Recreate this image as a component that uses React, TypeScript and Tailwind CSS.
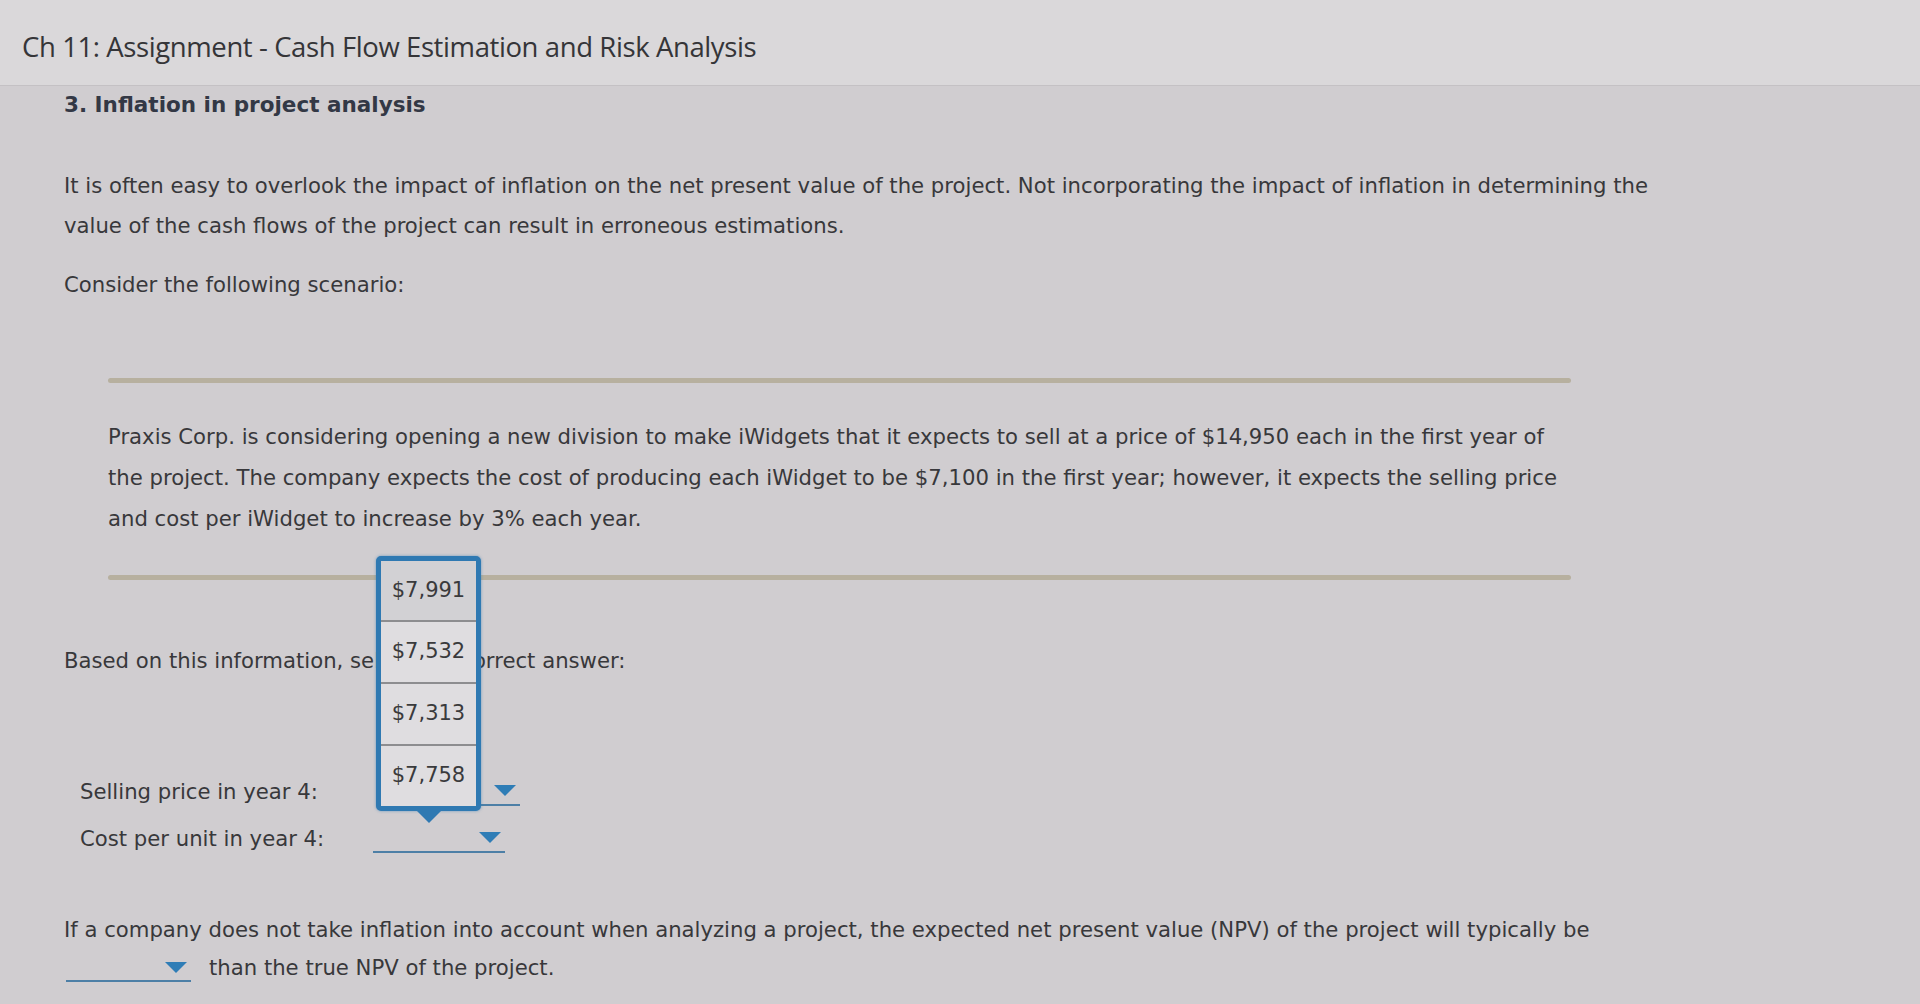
import React from "react";

const body = { fontFamily: '"DejaVu Sans", Verdana, sans-serif' } as const;

function Caret({ className = "" }: { className?: string }) {
  return (
    <svg width="22" height="11" viewBox="0 0 22 11" className={className}>
      <polygon points="0,0 22,0 11,11" fill="#2f7db6" />
    </svg>
  );
}

function Select({ width, children }: { width: string; children?: React.ReactNode }) {
  return (
    <div className={`relative flex h-[28px] items-center justify-end border-b-2 border-[#4d7fa6] pr-[4px] ${width}`}>
      <Caret />
      {children}
    </div>
  );
}

export default function App() {
  const options = ["$7,991", "$7,532", "$7,313", "$7,758"];
  return (
    <div className="min-h-screen w-full bg-[#d0cdd0] text-[#38383b]" style={body}>
      <header className="h-[86px] border-b border-[#c4c1c4] bg-[#dad8da] pl-[22px] pt-[29px]">
        <h1
          className="text-[27.5px] leading-[36px] text-[#353538]"
          style={{ fontFamily: '"Open Sans", "Noto Sans", sans-serif', letterSpacing: "-0.4px" }}
        >
          Ch 11: Assignment - Cash Flow Estimation and Risk Analysis
        </h1>
      </header>

      <main className="pl-[64px] pr-[200px]">
        <h2 className="mt-[5px] text-[21.5px] font-bold leading-[28px] text-[#333845]">
          3. Inflation in project analysis
        </h2>

        <p className="mt-[47px] max-w-[1630px] text-[21.2px] leading-[40px]">
          It is often easy to overlook the impact of inflation on the net present value of the project. Not
          incorporating the impact of inflation in determining the value of the cash flows of the project can result in
          erroneous estimations.
        </p>

        <p className="mt-[19px] text-[21.2px] leading-[40px]">Consider the following scenario:</p>

        <section className="ml-[44px]">
          <div className="mt-[73px] h-[5px] w-[1463px] rounded-full bg-[#b7b09f]" />
          <p className="mt-[33px] w-[1468px] text-[21.2px] leading-[41px]">
            Praxis Corp. is considering opening a new division to make iWidgets that it expects to sell at a price of
            $14,950 each in the first year of the project. The company expects the cost of producing each iWidget to be
            $7,100 in the first year; however, it expects the selling price and cost per iWidget to increase by 3% each
            year.
          </p>
          <div className="mt-[36px] h-[5px] w-[1463px] rounded-full bg-[#b7b09f]" />
        </section>

        <p className="mt-[61px] text-[21.2px] leading-[40px]">
          Based on this information, select the correct answer:
        </p>

        <div className="mt-[87px] pl-[16px] text-[21.2px]">
          <div className="flex h-[47px] items-center">
            <span className="w-[296px]">Selling price in year 4:</span>
            <Select width="w-[144px]">
              <div className="absolute bottom-[-7px] left-0 z-10 flex h-[255px] w-[105px] flex-col rounded-[5px] border-[5px] border-[#2f79b2] bg-[#e4e2e4] shadow-[0_0_3px_rgba(47,121,178,0.6)]">
                {options.map((o, i) => (
                  <div
                    key={o}
                    className={`flex flex-1 items-center justify-center text-[21px] text-[#3a3a3c] ${
                      i === 0 ? "bg-[#d2d1d4]" : "bg-[#dfdde0]"
                    } ${i < options.length - 1 ? "border-b-2 border-[#8d8d90]" : ""}`}
                  >
                    {o}
                  </div>
                ))}
                <svg
                  width="26"
                  height="13"
                  viewBox="0 0 26 13"
                  className="absolute bottom-[-17px] left-1/2 -translate-x-1/2"
                >
                  <polygon points="0,0 26,0 13,13" fill="#2f79b2" />
                </svg>
              </div>
            </Select>
          </div>
          <div className="flex h-[47px] items-center">
            <span className="w-[293px]">Cost per unit in year 4:</span>
            <Select width="w-[132px]" />
          </div>
        </div>

        <div className="mt-[49px] max-w-[1600px] text-[21.2px] leading-[38px]">
          <p>
            If a company does not take inflation into account when analyzing a project, the expected net present value
            (NPV) of the project will typically be
          </p>
          <div className="flex items-center">
            <div className="ml-[2px]">
              <Select width="w-[125px]" />
            </div>
            <span className="ml-[18px]">than the true NPV of the project.</span>
          </div>
        </div>
      </main>
    </div>
  );
}
